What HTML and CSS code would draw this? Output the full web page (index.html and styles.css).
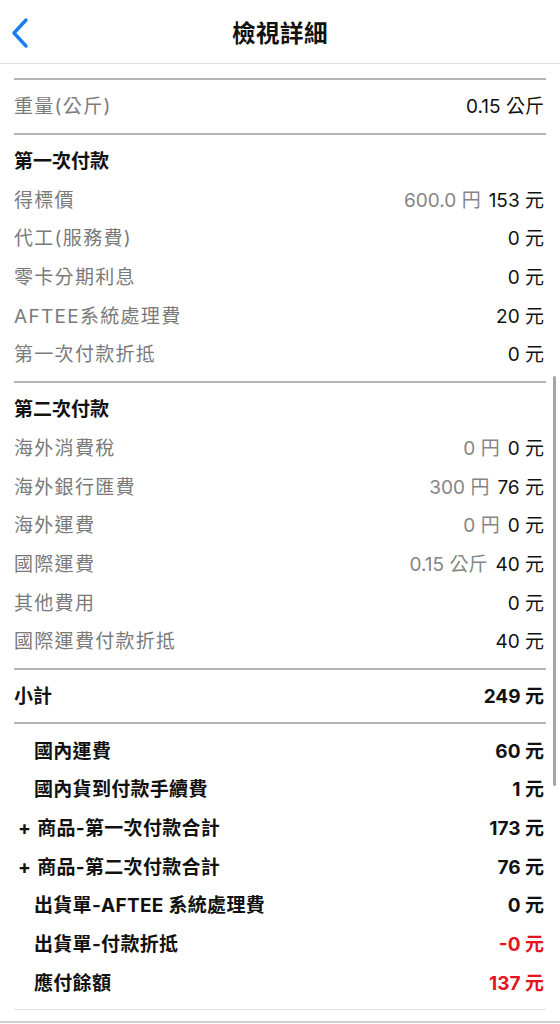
FILE: index.html
```html
<!DOCTYPE html>
<html lang="zh-Hant">
<head>
    <meta charset="UTF-8">
    <meta name="viewport" content="width=device-width, initial-scale=1.0">
    <title>檢視詳細</title>
    <link rel="stylesheet" href="styles.css">
</head>
<body>
    <header class="nav-bar">
        <a class="back-btn" href="#">
            <svg width="20" height="32" viewBox="0 0 20 32">
                <path d="M16 3 L4 16 L16 29" fill="none" stroke="#1a7ef2" stroke-width="3.4" stroke-linecap="round" stroke-linejoin="round"/>
            </svg>
        </a>
        <h1 class="nav-title">檢視詳細</h1>
    </header>

    <main class="detail">
        <section class="group">
            <div class="row"><span class="label">重量(公斤)</span><span class="value">0.15 公斤</span></div>
        </section>

        <section class="group">
            <div class="row heading"><span>第一次付款</span></div>
            <div class="row"><span class="label">得標價</span><span class="value"><span class="sub">600.0 円</span>153 元</span></div>
            <div class="row"><span class="label">代工(服務費)</span><span class="value">0 元</span></div>
            <div class="row"><span class="label">零卡分期利息</span><span class="value">0 元</span></div>
            <div class="row"><span class="label">AFTEE系統處理費</span><span class="value">20 元</span></div>
            <div class="row"><span class="label">第一次付款折抵</span><span class="value">0 元</span></div>
        </section>

        <section class="group">
            <div class="row heading"><span>第二次付款</span></div>
            <div class="row"><span class="label">海外消費稅</span><span class="value"><span class="sub">0 円</span>0 元</span></div>
            <div class="row"><span class="label">海外銀行匯費</span><span class="value"><span class="sub">300 円</span>76 元</span></div>
            <div class="row"><span class="label">海外運費</span><span class="value"><span class="sub">0 円</span>0 元</span></div>
            <div class="row"><span class="label">國際運費</span><span class="value"><span class="sub">0.15 公斤</span>40 元</span></div>
            <div class="row"><span class="label">其他費用</span><span class="value">0 元</span></div>
            <div class="row"><span class="label">國際運費付款折抵</span><span class="value">40 元</span></div>
        </section>

        <section class="group">
            <div class="row heading"><span>小計</span><span class="value">249 元</span></div>
        </section>

        <section class="group summary">
            <div class="row"><span class="label">國內運費</span><span class="value">60 元</span></div>
            <div class="row"><span class="label">國內貨到付款手續費</span><span class="value">1 元</span></div>
            <div class="row"><span class="label"><i class="plus">+</i>商品-第一次付款合計</span><span class="value">173 元</span></div>
            <div class="row"><span class="label"><i class="plus">+</i>商品-第二次付款合計</span><span class="value">76 元</span></div>
            <div class="row"><span class="label">出貨單-AFTEE 系統處理費</span><span class="value">0 元</span></div>
            <div class="row"><span class="label">出貨單-付款折抵</span><span class="value red">-0 元</span></div>
            <div class="row"><span class="label">應付餘額</span><span class="value red">137 元</span></div>
        </section>
    </main>

    <div class="scroll-thumb"></div>
</body>
</html>
```

FILE: styles.css
```css
body {
    margin: 0;
    padding: 0;
    background: #fff;
    color: #111;
    font-family: "Inter", "Noto Sans CJK TC", sans-serif;
    position: relative;
    overflow: hidden;
    height: 1024px;
}

.nav-bar {
    height: 63px;
    border-bottom: 1px solid #dcdcdc;
    display: flex;
    align-items: center;
    justify-content: center;
    position: relative;
}

.back-btn {
    position: absolute;
    left: 10px;
    top: 17px;
}

.nav-title {
    margin: 0;
    font-size: 23.5px;
    font-weight: 700;
    letter-spacing: 0.5px;
}

.detail {
    padding: 14px 14px 0;
}

.group {
    border-top: 2px solid #b4b4b4;
    padding: 7px 0;
}

.group:last-child {
    border-bottom: 1px solid #e2e2e2;
}

.row {
    height: 38.7px;
    display: flex;
    align-items: center;
    justify-content: space-between;
    font-size: 19px;
    padding: 0 2px 3px 0;
    box-sizing: border-box;
}

.label {
    color: #7a7a7a;
    letter-spacing: 1.3px;
}

.value {
    color: #111;
}

.sub {
    color: #858585;
    margin-right: 8px;
}

.heading {
    font-weight: 700;
    color: #111;
}

.summary .row {
    font-weight: 700;
}

.summary .label {
    color: #111;
    padding-left: 20px;
    letter-spacing: 0.3px;
}

.plus {
    font-style: normal;
    margin-left: -16px;
    margin-right: 6px;
}

.red {
    color: #e5141c;
}

.scroll-thumb {
    position: absolute;
    right: 4px;
    top: 376px;
    width: 3px;
    height: 410px;
    border-radius: 2px;
    background: #a6a6a6;
}

body::after {
    content: "";
    position: absolute;
    left: 0;
    right: 0;
    top: 1021px;
    border-top: 2px solid #d0d0d0;
}
```
